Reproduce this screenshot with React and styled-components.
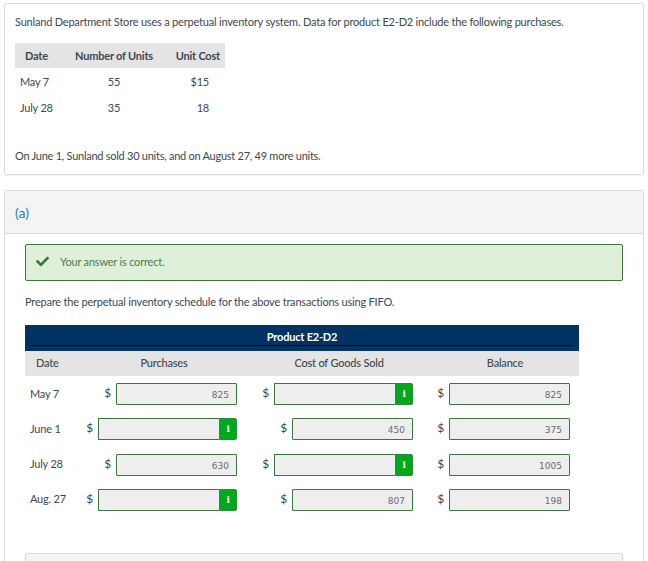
import styled, { createGlobalStyle } from "styled-components"
import { FaCheck } from "react-icons/fa"

const purchases = [
    { date: "May 7", units: "55", cost: "$15" },
    { date: "July 28", units: "35", cost: "18" },
]

const schedule = [
    { date: "May 7", purchases: "825", cogs: null, balance: "825" },
    { date: "June 1", purchases: null, cogs: "450", balance: "375" },
    { date: "July 28", purchases: "630", cogs: null, balance: "1005" },
    { date: "Aug. 27", purchases: null, cogs: "807", balance: "198" },
]

function Money({ value }) {
    return (
        <MoneyCell>
            <Dollar>$</Dollar>
            {value === null ? (
                <InputGroup>
                    <EmptyInput />
                    <InfoButton>i</InfoButton>
                </InputGroup>
            ) : (
                <ValueInput>{value}</ValueInput>
            )}
        </MoneyCell>
    )
}

export default function App() {
    return (
        <>
            <GlobalStyle />
            <Page>
                <Card>
                    <Intro>Sunland Department Store uses a perpetual inventory system. Data for product E2-D2 include the following purchases.</Intro>
                    <DataTable>
                        <DataHead>
                            <span>Date</span>
                            <span>Number of Units</span>
                            <span>Unit Cost</span>
                        </DataHead>
                        {purchases.map((p) => (
                            <DataRow key={p.date}>
                                <span>{p.date}</span>
                                <span>{p.units}</span>
                                <span>{p.cost}</span>
                            </DataRow>
                        ))}
                    </DataTable>
                    <Outro>On June 1, Sunland sold 30 units, and on August 27, 49 more units.</Outro>
                </Card>

                <PartCard>
                    <PartHeader>(a)</PartHeader>
                    <PartBody>
                        <Alert>
                            <FaCheck size={13} color="#3c763d" />
                            <span>Your answer is correct.</span>
                        </Alert>
                        <Prompt>Prepare the perpetual inventory schedule for the above transactions using FIFO.</Prompt>
                        <Schedule>
                            <Title><span>Product E2-D2</span></Title>
                            <ColumnHead>
                                <HeadDate>Date</HeadDate>
                                <span>Purchases</span>
                                <span>Cost of Goods Sold</span>
                                <span>Balance</span>
                            </ColumnHead>
                            <Rows>
                                {schedule.map((r) => (
                                    <Row key={r.date}>
                                        <RowDate>{r.date}</RowDate>
                                        <Money value={r.purchases} />
                                        <Money value={r.cogs} />
                                        <Money value={r.balance} />
                                    </Row>
                                ))}
                            </Rows>
                        </Schedule>
                        <NextBox />
                    </PartBody>
                </PartCard>
            </Page>
        </>
    )
}

const GlobalStyle = createGlobalStyle`
    html, body {
        margin: 0;
        height: 561px;
        overflow: hidden;
        background-color: #fff;
    }
    * {
        box-sizing: border-box;
    }
    body {
        font-family: 'Lato', sans-serif;
        font-size: 11px;
        letter-spacing: -0.2px;
        color: #3d4850;
    }
`

const Page = styled.div`
    padding: 3px 4px 0 4px;
    display: flex;
    flex-direction: column;
    gap: 15px;
`

const Card = styled.section`
    height: 172px;
    border: 1px solid #ddd;
    border-radius: 2px;
    padding: 11px 10px;
    box-shadow: 0 1px 1px rgba(0, 0, 0, 0.05);
`

const Intro = styled.p`
    margin: 0;
    line-height: 14px;
`

const DataTable = styled.div`
    margin-top: 14px;
    width: 210px;
`

const DataGrid = styled.div`
    display: grid;
    grid-template-columns: 55px 88px 67px;
    align-items: center;
    span {
        text-align: center;
    }
    span:first-child {
        text-align: left;
    }
    span:last-child {
        text-align: right;
    }
`

const DataHead = styled(DataGrid)`
    height: 25px;
    background-color: #e4e4e4;
    font-weight: 700;
    span:first-child {
        padding-left: 10px;
    }
    span:last-child {
        padding-right: 5px;
    }
`

const DataRow = styled(DataGrid)`
    height: 26px;
    span:first-child {
        padding-left: 5px;
    }
    span:last-child {
        padding-right: 16px;
    }
`

const Outro = styled.p`
    margin: 29px 0 0;
    line-height: 14px;
    letter-spacing: -0.26px;
`

const PartCard = styled.section`
    border: 1px solid #ddd;
    border-radius: 2px;
    height: 400px;
`

const PartHeader = styled.header`
    height: 43px;
    background-color: #f4f4f4;
    border-bottom: 1px solid #ddd;
    padding: 0 10px;
    display: flex;
    align-items: center;
    color: #1f7fb5;
    font-size: 14px;
    letter-spacing: 0;
`

const PartBody = styled.div`
    padding: 10px 20px 0;
`

const Alert = styled.div`
    width: 598px;
    height: 37px;
    background-color: #dff0d8;
    border: 1px solid #3c763d;
    border-radius: 2px;
    display: flex;
    align-items: center;
    padding: 0 0 2px 10px;
    gap: 11px;
    color: #4d7a50;
`

const Prompt = styled.p`
    margin: 14px 0 0;
    line-height: 14px;
`

const Schedule = styled.div`
    margin-top: 16px;
    width: 554px;
`

const Title = styled.div`
    height: 26px;
    background-color: #003361;
    padding: 0 5px;
    span {
        display: block;
        height: 21px;
        line-height: 23px;
        border-bottom: 1px solid #000;
        text-align: center;
        color: #fff;
        font-weight: 700;
    }
`

const ColumnHead = styled.div`
    height: 25px;
    background-color: #e4e4e4;
    display: grid;
    grid-template-columns: 55px 146px 28px 148px 27px 130px;
    align-items: center;
    padding: 0 0 2px 11px;
    font-weight: 500;
    text-align: center;
    span:nth-child(2) {
        grid-column: 2;
    }
    span:nth-child(3) {
        grid-column: 4;
    }
    span:nth-child(4) {
        grid-column: 6;
    }
`

const HeadDate = styled.span`
    text-align: left;
`

const Rows = styled.div`
    padding: 7px 9px 0 5px;
    display: flex;
    flex-direction: column;
    gap: 13.33px;
`

const Row = styled.div`
    display: grid;
    grid-template-columns: 55px 152px 176px 157px;
    height: 22px;
    align-items: center;
`

const RowDate = styled.span`
    margin-top: -2px;
`

const MoneyCell = styled.div`
    display: flex;
    justify-content: flex-end;
    align-items: center;
    gap: 5px;
    height: 22px;
`

const Dollar = styled.span`
    font-size: 12px;
    margin-top: -3px;
`

const ValueInput = styled.div`
    width: 121px;
    height: 22px;
    background-color: #eee;
    border: 1px solid #3c763d;
    border-radius: 1px;
    display: flex;
    align-items: center;
    justify-content: flex-end;
    padding: 2px 7px 0 0;
    font-family: 'DejaVu Sans', sans-serif;
    font-size: 9px;
    letter-spacing: 0;
    color: #6b6b6b;
`

const InputGroup = styled.div`
    width: 139px;
    height: 22px;
    display: flex;
`

const EmptyInput = styled.div`
    flex: 1;
    background-color: #eee;
    border: 1px solid #3c763d;
    border-right: none;
    border-radius: 1px 0 0 1px;
`

const InfoButton = styled.div`
    width: 18px;
    background-color: #00a91c;
    border: 1px solid #2e8b3a;
    border-radius: 0 2px 2px 0;
    color: #fff;
    font-family: 'DejaVu Serif', serif;
    font-weight: 700;
    font-size: 9px;
    display: flex;
    align-items: center;
    justify-content: center;
`

const NextBox = styled.div`
    width: 598px;
    height: 60px;
    margin-top: 42px;
    background-color: #f4f4f4;
    border: 1px solid #ddd;
    border-radius: 2px;
`
